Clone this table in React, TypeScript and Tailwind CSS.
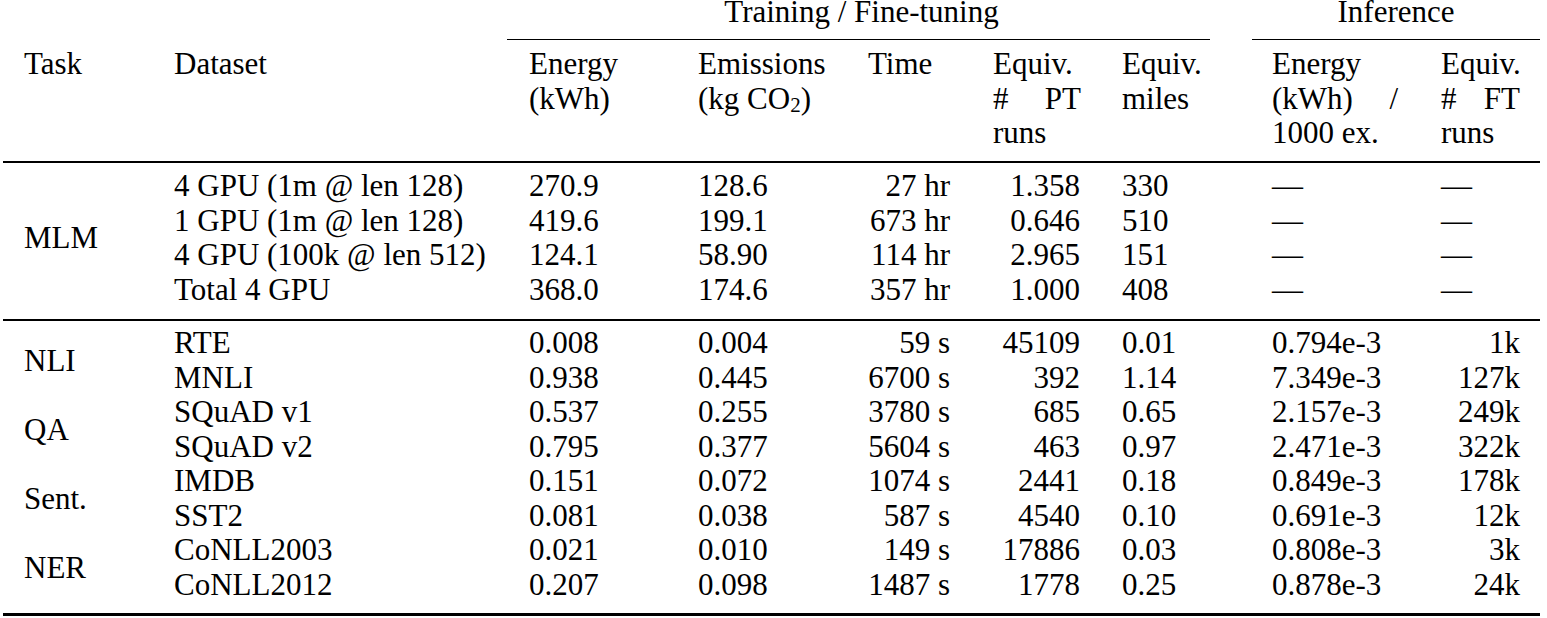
const mlmRows = [
  ["4 GPU (1m @ len 128)", "270.9", "128.6", "27 hr", "1.358", "330", "—", "—"],
  ["1 GPU (1m @ len 128)", "419.6", "199.1", "673 hr", "0.646", "510", "—", "—"],
  ["4 GPU (100k @ len 512)", "124.1", "58.90", "114 hr", "2.965", "151", "—", "—"],
  ["Total 4 GPU", "368.0", "174.6", "357 hr", "1.000", "408", "—", "—"],
];

const taskGroups = [
  {
    task: "NLI",
    rows: [
      ["RTE", "0.008", "0.004", "59 s", "45109", "0.01", "0.794e-3", "1k"],
      ["MNLI", "0.938", "0.445", "6700 s", "392", "1.14", "7.349e-3", "127k"],
    ],
  },
  {
    task: "QA",
    rows: [
      ["SQuAD v1", "0.537", "0.255", "3780 s", "685", "0.65", "2.157e-3", "249k"],
      ["SQuAD v2", "0.795", "0.377", "5604 s", "463", "0.97", "2.471e-3", "322k"],
    ],
  },
  {
    task: "Sent.",
    rows: [
      ["IMDB", "0.151", "0.072", "1074 s", "2441", "0.18", "0.849e-3", "178k"],
      ["SST2", "0.081", "0.038", "587 s", "4540", "0.10", "0.691e-3", "12k"],
    ],
  },
  {
    task: "NER",
    rows: [
      ["CoNLL2003", "0.021", "0.010", "149 s", "17886", "0.03", "0.808e-3", "3k"],
      ["CoNLL2012", "0.207", "0.098", "1487 s", "1778", "0.25", "0.878e-3", "24k"],
    ],
  },
];

const rowGrid =
  "grid grid-cols-[355px_169px_170px_125px_129px_150px_169px_99px] whitespace-nowrap";

function DataRow({ cells }: { cells: string[] }) {
  const [dataset, energy, emissions, time, pt, miles, infEnergy, ft] = cells;
  const dash = ft === "—";
  return (
    <div className={rowGrid}>
      <div>{dataset}</div>
      <div>{energy}</div>
      <div>{emissions}</div>
      <div className="pr-[43px] text-right">{time}</div>
      <div className="pr-[42px] text-right">{pt}</div>
      <div>{miles}</div>
      <div>{infEnergy}</div>
      <div className={dash ? "" : "pr-[20px] text-right"}>{ft}</div>
    </div>
  );
}

function Group({ task, rows }: { task: string; rows: string[][] }) {
  return (
    <div className="flex">
      <div className="flex w-[171px] items-center pl-[21px]">{task}</div>
      <div>
        {rows.map((r) => (
          <DataRow key={r[0]} cells={r} />
        ))}
      </div>
    </div>
  );
}

export default function App() {
  return (
    <div className="min-h-screen bg-white font-['Liberation_Serif','Times_New_Roman',serif] text-[31px] leading-[34.5px] text-black">
      <div className="ml-[3px] w-[1537px]">
        {/* spanning column titles */}
        <div className="flex leading-[24px]">
          <div className="w-[504px]" />
          <div className="h-[40px] w-[703px] border-b border-black pl-[6px] text-center">
            Training / Fine-tuning
          </div>
          <div className="w-[42px]" />
          <div className="h-[40px] w-[288px] border-b border-black text-center">
            Inference
          </div>
        </div>

        {/* column headers */}
        <div className="flex border-b-2 border-black pt-[7.3px] pb-[10.3px]">
          <div className="w-[171px] pl-[21px]">Task</div>
          <div className={rowGrid}>
            <div>Dataset</div>
            <div>
              <div>Energy</div>
              <div>(kWh)</div>
            </div>
            <div>
              <div>Emissions</div>
              <div>
                (kg CO<span className="align-[-3px] text-[21px] leading-none">2</span>)
              </div>
            </div>
            <div>Time</div>
            <div className="w-[88px]">
              <div>Equiv.</div>
              <div className="flex justify-between">
                <span>#</span>
                <span>PT</span>
              </div>
              <div>runs</div>
            </div>
            <div>
              <div>Equiv.</div>
              <div>miles</div>
            </div>
            <div className="w-[126px]">
              <div>Energy</div>
              <div className="flex justify-between">
                <span>(kWh)</span>
                <span>/</span>
              </div>
              <div>1000 ex.</div>
            </div>
            <div className="w-[79px]">
              <div>Equiv.</div>
              <div className="flex justify-between">
                <span>#</span>
                <span>FT</span>
              </div>
              <div>runs</div>
            </div>
          </div>
        </div>

        {/* pre-training */}
        <div className="border-b-2 border-black pt-[6.2px] pb-[11.3px]">
          <Group task="MLM" rows={mlmRows} />
        </div>

        {/* fine-tuning tasks */}
        <div className="border-b-[3.5px] border-black pt-[5.7px] pb-[10.8px]">
          {taskGroups.map((g) => (
            <Group key={g.task} task={g.task} rows={g.rows} />
          ))}
        </div>
      </div>
    </div>
  );
}
